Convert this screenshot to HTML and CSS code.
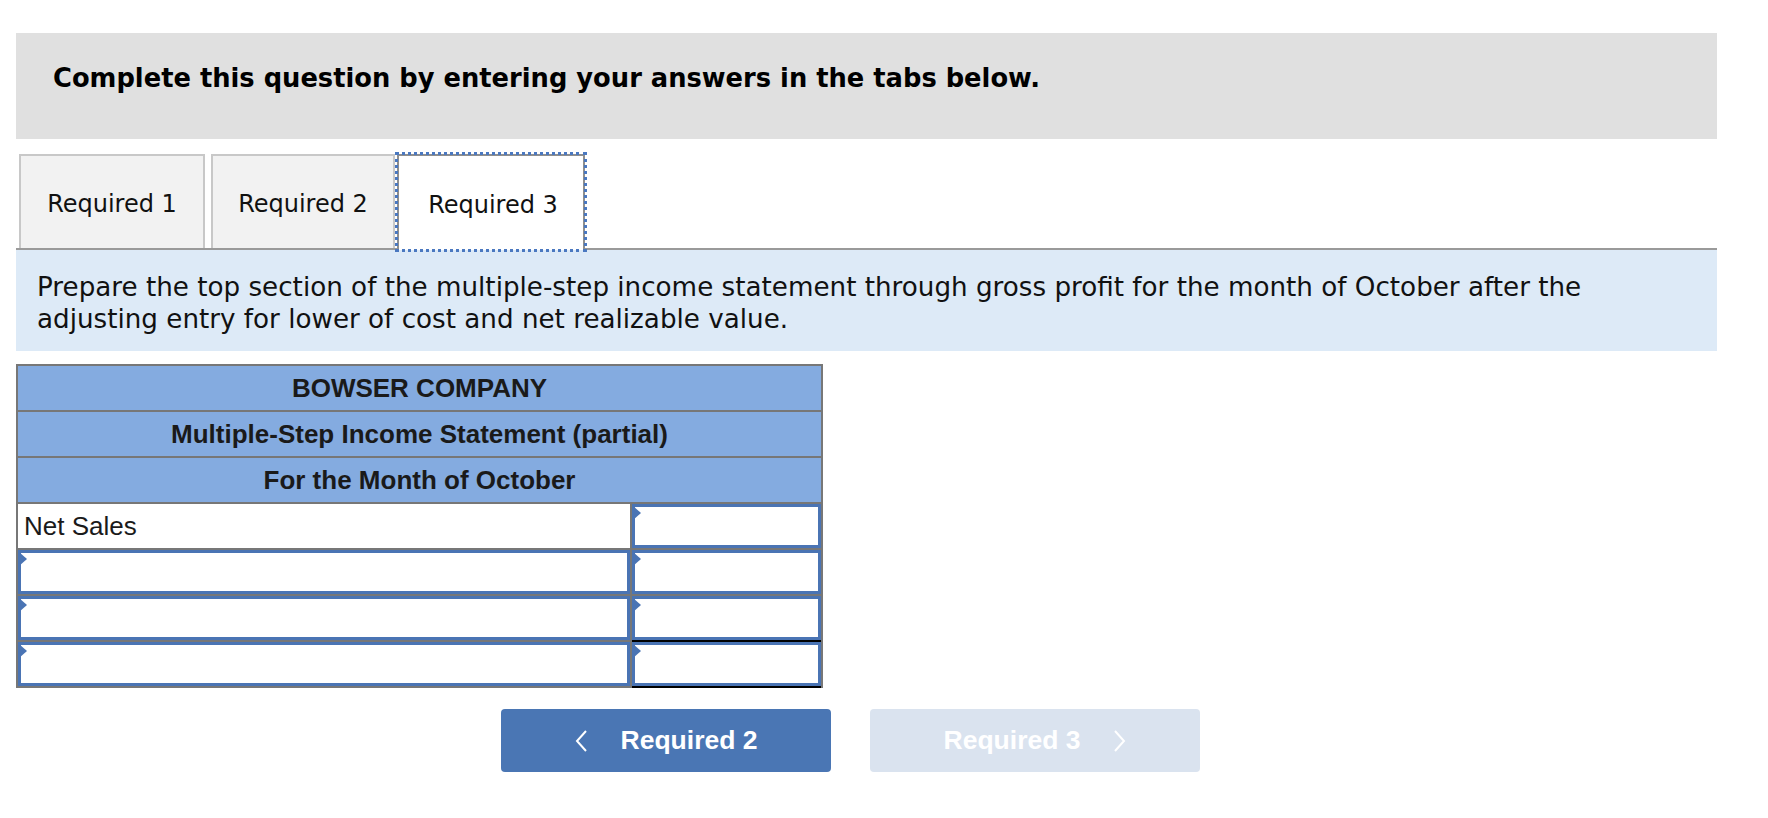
FILE: index.html
```html
<!DOCTYPE html>
<html lang="en">
<head>
<meta charset="utf-8">
<title>Required 3</title>
<link rel="stylesheet" href="styles.css">
</head>
<body>
<div class="page">
  <div class="banner">
    <h1 class="banner-title">Complete this question by entering your answers in the tabs below.</h1>
  </div>

  <div class="tabs">
    <div class="tab">Required 1</div>
    <div class="tab">Required 2</div>
    <div class="tab tab-active">Required 3</div>
  </div>

  <div class="panel">
    <p class="panel-text">Prepare the top section of the multiple-step income statement through gross profit for the month of October after the adjusting entry for lower of cost and net realizable value.</p>
  </div>

  <div class="stmt">
    <div class="head">BOWSER COMPANY</div>
    <div class="head">Multiple-Step Income Statement (partial)</div>
    <div class="head">For the Month of October</div>

    <div class="label">Net Sales</div>
    <div class="field"></div>

    <div class="field"></div>
    <div class="field"></div>

    <div class="field"></div>
    <div class="field field-total"></div>

    <div class="field"></div>
    <div class="field field-total"></div>
  </div>

  <div class="nav">
    <button class="btn btn-prev" type="button">
      <svg class="chev" width="13" height="22" viewBox="0 0 13 22"><polyline points="11,1 2,11 11,21" fill="none" stroke="#ffffff" stroke-width="2"/></svg>
      <span>Required 2</span>
    </button>
    <button class="btn btn-next" type="button" disabled>
      <span>Required 3</span>
      <svg class="chev" width="13" height="22" viewBox="0 0 13 22"><polyline points="2,1 11,11 2,21" fill="none" stroke="#ffffff" stroke-width="2"/></svg>
    </button>
  </div>
</div>
</body>
</html>
```

FILE: styles.css
```css
html, body {
  margin: 0;
  padding: 0;
  background: #ffffff;
}

.page {
  margin-left: 16px;
  width: 1701px;
  padding-top: 33px;
}

.banner {
  background: #e0e0e0;
  height: 106px;
  box-sizing: border-box;
  padding: 30px 0 0 37px;
}

.banner-title {
  margin: 0;
  font-family: "DejaVu Sans", Verdana, sans-serif;
  font-weight: bold;
  font-size: 25.75px;
  line-height: 30px;
  color: #000000;
}

.tabs {
  display: flex;
  align-items: stretch;
  margin-top: 15px;
  height: 96px;
  padding-left: 3px;
  gap: 6px;
  border-bottom: 2px solid #9a9a9a;
  box-sizing: border-box;
}

.tab {
  display: flex;
  align-items: center;
  justify-content: center;
  width: 186px;
  box-sizing: border-box;
  padding-top: 4px;
  background: #f2f2f2;
  border: 2px solid #c8c8c8;
  border-bottom: none;
  font-family: "DejaVu Sans", Verdana, sans-serif;
  font-size: 24px;
  color: #111111;
}

.tab + .tab {
  width: 184px;
}

.tab-active {
  width: 188px !important;
  margin-left: -4px;
  padding-left: 4px;
  background: #ffffff;
  border: 2px solid #8e8e8e;
  border-bottom: none;
  outline: 3px dotted #4a78c0;
  outline-offset: -1px;
  position: relative;
  z-index: 1;
  margin-bottom: -2px;
}

.panel {
  background: #ddeaf7;
  padding: 21px 21px 16px 21px;
}

.panel-text {
  margin: 0;
  font-family: "DejaVu Sans", Verdana, sans-serif;
  font-size: 26.2px;
  line-height: 32px;
  color: #111111;
}

.stmt {
  margin-top: 13px;
  width: 807px;
  box-sizing: border-box;
  display: grid;
  grid-template-columns: 612px 1fr;
  grid-auto-rows: 44px;
  gap: 2px;
  background: #777777;
  border: 2px solid #777777;
  font-family: "Liberation Sans", Arial, sans-serif;
  font-size: 26px;
  color: #1a1a1a;
}

.head {
  grid-column: 1 / -1;
  display: flex;
  align-items: center;
  justify-content: center;
  background: #84abe0;
  font-weight: bold;
}

.label {
  display: flex;
  align-items: center;
  background: #ffffff;
  padding-left: 6px;
}

.field {
  position: relative;
  box-sizing: border-box;
  border: 3px solid #4a74b4;
  background: #ffffff;
}

.field::before {
  content: "";
  position: absolute;
  left: -2px;
  top: -1px;
  border-left: 8px solid #4a74b4;
  border-top: 7px solid transparent;
  border-bottom: 7px solid transparent;
}

.field-total {
  box-shadow: 0 2px 0 #000000;
}

.nav {
  display: flex;
  gap: 39px;
  margin-top: 21px;
  margin-left: 485px;
}

.btn {
  display: flex;
  align-items: center;
  justify-content: center;
  gap: 33px;
  width: 330px;
  height: 63px;
  border: none;
  border-radius: 4px;
  font-family: "Liberation Sans", Arial, sans-serif;
  font-weight: bold;
  font-size: 26.5px;
  color: #ffffff;
  padding: 0;
}

.btn-prev {
  background: #4a76b4;
}

.btn-next {
  background: #dae3ef;
  color: #ffffff;
}
```
